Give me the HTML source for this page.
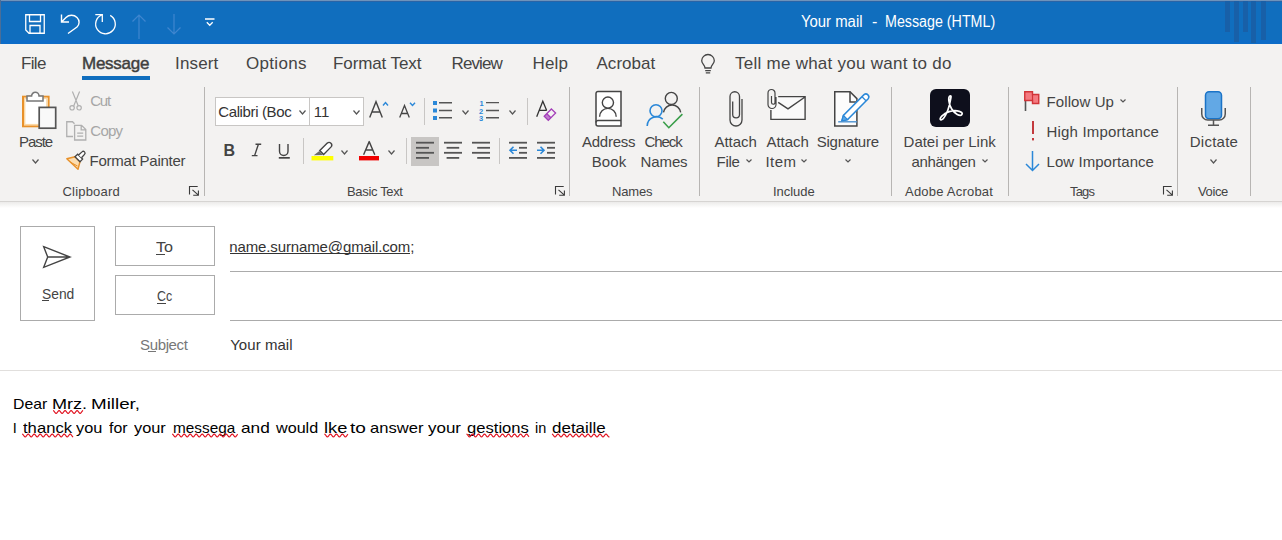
<!DOCTYPE html>
<html><head><meta charset="utf-8"><style>
html,body{margin:0;padding:0;}
body{width:1282px;height:540px;overflow:hidden;position:relative;background:#fff;font-family:"Liberation Sans",sans-serif;}
.a{position:absolute;}
.t{position:absolute;white-space:pre;line-height:1.1171875;font-family:"Liberation Sans",sans-serif;}
svg{overflow:visible}
</style></head><body>
<div class="a" style="left:0px;top:0px;width:1282px;height:44px;background:#106EBE;"></div>
<div class="a" style="left:0px;top:40px;width:1282px;height:4px;background:#0C6CC8;"></div>
<div class="a" style="left:0px;top:0px;width:1282px;height:1px;background:#6F93BB;"></div>
<div class="a" style="left:0px;top:1px;width:1282px;height:1px;background:#2A64A6;"></div>
<div class="a" style="left:0px;top:0px;width:1px;height:44px;background:#4A6E98;"></div>
<div class="a" style="left:1225px;top:1px;width:5px;height:31px;background:#1860A8;"></div>
<div class="a" style="left:1234px;top:1px;width:5px;height:41px;background:#1860A8;"></div>
<div class="a" style="left:1243px;top:1px;width:5px;height:31px;background:#1860A8;"></div>
<div class="a" style="left:1251px;top:1px;width:5px;height:42px;background:#1860A8;"></div>
<div class="a" style="left:1261px;top:1px;width:5px;height:39px;background:#1860A8;"></div>
<div class="t" style="left:801.00px;top:13px;font-size:16px;color:#FFFFFF;transform:scaleX(0.9305);transform-origin:0 0;">Your mail</div>
<div class="t" style="left:872.00px;top:13px;font-size:16px;color:#FFFFFF;">-</div>
<div class="t" style="left:885.11px;top:13px;font-size:16px;color:#FFFFFF;transform:scaleX(0.8916);transform-origin:0 0;">Message (HTML)</div>
<svg class="a" style="left:25px;top:14px" width="20" height="20" viewBox="0 0 20 20"><path d="M0.75 0.75H19.25V19.25H4L0.75 16Z M4.5 0.75V7.5H15.5V0.75 M5 19.25V11.5H15V19.25" fill="none" stroke="#fff" stroke-width="1.3"/></svg>
<svg class="a" style="left:60px;top:13px" width="20" height="21" viewBox="0 0 20 21"><path d="M1.5 1.5V9H9 M1.5 9L6 4.5C9 1.5 14 1.5 17 4.5C20 7.5 19.5 11.5 17 14L8 20.5" fill="none" stroke="#fff" stroke-width="1.4"/></svg>
<svg class="a" style="left:94px;top:13px" width="22" height="22" viewBox="0 0 22 22"><path d="M16.2 2.4A9.8 9.8 0 1 1 7.8 1.9" fill="none" stroke="#fff" stroke-width="1.3"/><path d="M1.3 1.6H8.3V8.9" fill="none" stroke="#fff" stroke-width="1.3"/></svg>
<svg class="a" style="left:132px;top:14px" width="15" height="25" viewBox="0 0 15 25"><path d="M7 1V25 M0.5 7.5L7 1L13.5 7.5" fill="none" stroke="#3F86CF" stroke-width="1.2"/></svg>
<svg class="a" style="left:167px;top:14px" width="15" height="21" viewBox="0 0 15 21"><path d="M7 0V20 M0.5 13.5L7 20L13.5 13.5" fill="none" stroke="#3F86CF" stroke-width="1.2"/></svg>
<svg class="a" style="left:204.5px;top:18px" width="10" height="10" viewBox="0 0 10 10"><path d="M0 1H9.5 M1.8 4.2L4.75 7.2L7.7 4.2" fill="none" stroke="#fff" stroke-width="1.3"/></svg>
<div class="a" style="left:0px;top:44px;width:1282px;height:158px;background:#F3F2F1;"></div>
<div class="t" style="left:21.00px;top:54px;font-size:17px;color:#444444;letter-spacing:-0.646px;">File</div>
<div class="t" style="left:82.00px;top:54px;font-size:17px;color:#3f3f3f;letter-spacing:-0.254px;-webkit-text-stroke:0.45px #3f3f3f;">Message</div>
<div class="a" style="left:82px;top:76px;width:68px;height:4px;background:#106EBE;"></div>
<div class="t" style="left:175.00px;top:54px;font-size:17px;color:#444444;letter-spacing:0.161px;">Insert</div>
<div class="t" style="left:246.00px;top:54px;font-size:17px;color:#444444;letter-spacing:0.319px;">Options</div>
<div class="t" style="left:333.00px;top:54px;font-size:17px;color:#444444;letter-spacing:-0.102px;">Format Text</div>
<div class="t" style="left:451.50px;top:54px;font-size:17px;color:#444444;letter-spacing:-0.893px;">Review</div>
<div class="t" style="left:532.50px;top:54px;font-size:17px;color:#444444;letter-spacing:0.164px;">Help</div>
<div class="t" style="left:596.50px;top:54px;font-size:17px;color:#444444;letter-spacing:0.023px;">Acrobat</div>
<div class="t" style="left:735.00px;top:54px;font-size:17px;color:#444444;letter-spacing:0.257px;">Tell me what you want to do</div>
<svg class="a" style="left:700px;top:53px" width="16" height="22" viewBox="0 0 16 22"><path d="M5 15C5 12 1.7 10.8 1.7 7.8A6.3 6.3 0 0 1 14.3 7.8C14.3 10.8 11 12 11 15Z M5.2 17.6H10.8 M5.8 19.9H10.2" fill="none" stroke="#444" stroke-width="1.3"/></svg>
<div class="a" style="left:0px;top:201px;width:1282px;height:1px;background:#D6D4D2;"></div>
<div class="a" style="left:0px;top:202px;width:1282px;height:6px;background:linear-gradient(#ECEBEA,#FFFFFF);"></div>
<div class="a" style="left:204px;top:87px;width:1px;height:109px;background:#B7B5B3;"></div>
<div class="a" style="left:569px;top:87px;width:1px;height:109px;background:#B7B5B3;"></div>
<div class="a" style="left:699px;top:87px;width:1px;height:109px;background:#B7B5B3;"></div>
<div class="a" style="left:891px;top:87px;width:1px;height:109px;background:#B7B5B3;"></div>
<div class="a" style="left:1008px;top:87px;width:1px;height:109px;background:#B7B5B3;"></div>
<div class="a" style="left:1177px;top:87px;width:1px;height:109px;background:#B7B5B3;"></div>
<div class="a" style="left:1250px;top:87px;width:1px;height:109px;background:#B7B5B3;"></div>
<div class="t" style="left:62.50px;top:185px;font-size:13px;color:#444444;letter-spacing:0.198px;">Clipboard</div>
<div class="t" style="left:347.00px;top:185px;font-size:13px;color:#444444;letter-spacing:-0.337px;">Basic Text</div>
<div class="t" style="left:612.00px;top:185px;font-size:13px;color:#444444;letter-spacing:-0.169px;">Names</div>
<div class="t" style="left:773.00px;top:185px;font-size:13px;color:#444444;letter-spacing:-0.032px;">Include</div>
<div class="t" style="left:905.00px;top:185px;font-size:13px;color:#444444;letter-spacing:0.217px;">Adobe Acrobat</div>
<div class="t" style="left:1070.00px;top:185px;font-size:13px;color:#444444;letter-spacing:-0.820px;">Tags</div>
<div class="t" style="left:1198.00px;top:185px;font-size:13px;color:#444444;letter-spacing:-0.393px;">Voice</div>
<svg class="a" style="left:189px;top:186px" width="11" height="10" viewBox="0 0 11 10"><path d="M0.5 8.6V0.5H8.7" fill="none" stroke="#3a3a3a" stroke-width="1.1"/><path d="M3.5 3.8L9.4 9.2 M9.4 4.4V9.2H4.2" fill="none" stroke="#3a3a3a" stroke-width="1.1"/></svg>
<svg class="a" style="left:555px;top:186px" width="11" height="10" viewBox="0 0 11 10"><path d="M0.5 8.6V0.5H8.7" fill="none" stroke="#3a3a3a" stroke-width="1.1"/><path d="M3.5 3.8L9.4 9.2 M9.4 4.4V9.2H4.2" fill="none" stroke="#3a3a3a" stroke-width="1.1"/></svg>
<svg class="a" style="left:1163px;top:186px" width="11" height="10" viewBox="0 0 11 10"><path d="M0.5 8.6V0.5H8.7" fill="none" stroke="#3a3a3a" stroke-width="1.1"/><path d="M3.5 3.8L9.4 9.2 M9.4 4.4V9.2H4.2" fill="none" stroke="#3a3a3a" stroke-width="1.1"/></svg>
<svg class="a" style="left:22px;top:91px" width="35" height="39" viewBox="0 0 35 39"><rect x="1" y="5.7" width="25.6" height="29.6" fill="#fff" stroke="#E8912A" stroke-width="2"/><rect x="2.7" y="7.4" width="22.2" height="26.2" fill="none" stroke="#FBD9A6" stroke-width="1.4"/><path d="M5 10V5H9.6A3.7 3.7 0 0 1 17 5H21V10Z" fill="#fff" stroke="#777" stroke-width="1.5"/><rect x="17.2" y="16.4" width="16.5" height="20.8" fill="#F9F9F9" stroke="#555" stroke-width="1.7"/></svg>
<div class="t" style="left:19.00px;top:134px;font-size:15px;color:#444444;letter-spacing:-1.054px;">Paste</div>
<svg class="a" style="left:32px;top:158.5px" width="7" height="5" viewBox="0 0 7 5"><path d="M0.5 0.5L3.5 4L6.5 0.5" fill="none" stroke="#555" stroke-width="1.2"/></svg>
<svg class="a" style="left:69px;top:91px" width="14" height="20" viewBox="0 0 14 20"><path d="M3.4 0.6L9.3 15 M10.6 0.6L4.7 15" fill="none" stroke="#B0B0B0" stroke-width="1.2"/><circle cx="3.1" cy="16.8" r="2.2" fill="none" stroke="#B0B0B0" stroke-width="1.2"/><circle cx="10.1" cy="16.8" r="2.2" fill="none" stroke="#B0B0B0" stroke-width="1.2"/></svg>
<div class="t" style="left:90.30px;top:93px;font-size:15px;color:#A6A6A6;letter-spacing:-1.287px;">Cut</div>
<svg class="a" style="left:66px;top:121px" width="21" height="20" viewBox="0 0 21 20"><path d="M7 15.5H0.75V0.75H6.5L8.5 2.8" fill="none" stroke="#B0B0B0" stroke-width="1.3"/><path d="M8.6 4.3H15.6L19.8 8.5V19H8.6Z M15.2 4.3V8.9H19.8 M11.2 12.2H17.2 M11.2 15.2H17.2" fill="none" stroke="#B0B0B0" stroke-width="1.3"/></svg>
<div class="t" style="left:90.30px;top:123px;font-size:15px;color:#A6A6A6;letter-spacing:-0.739px;">Copy</div>
<svg class="a" style="left:66px;top:151px" width="20" height="19" viewBox="0 0 20 19"><path d="M0.8 7.8L9 5.8L14 10.8L12 18.3Z" fill="#FCDDB0" stroke="#E8912A" stroke-width="1.4" stroke-linejoin="round"/><path d="M4 11L11.5 15" stroke="#E8912A" stroke-width="1"/><path d="M9 5.8L11.7 3.2L16.6 8.1L14 10.8Z" fill="#fff" stroke="#444" stroke-width="1.3"/><path d="M12.6 4L16 0.9A1.7 1.7 0 0 1 18.5 3.4L15.5 6.8" fill="#fff" stroke="#444" stroke-width="1.3"/></svg>
<div class="t" style="left:89.60px;top:153px;font-size:15px;color:#444444;letter-spacing:-0.246px;">Format Painter</div>
<div class="a" style="left:215px;top:97px;width:95px;height:29px;background:#fff;box-sizing:border-box;border:1px solid #C8C6C4;"></div>
<div class="a" style="left:309px;top:97px;width:55px;height:29px;background:#fff;box-sizing:border-box;border:1px solid #C8C6C4;"></div>
<div class="t" style="left:218.20px;top:104px;font-size:15px;color:#333;letter-spacing:-0.365px;">Calibri (Boc</div>
<svg class="a" style="left:299px;top:110.3px" width="7" height="5" viewBox="0 0 7 5"><path d="M0.5 0.5L3.5 4L6.5 0.5" fill="none" stroke="#555" stroke-width="1.2"/></svg>
<div class="t" style="left:313.70px;top:104px;font-size:15px;color:#333;">11</div>
<svg class="a" style="left:353px;top:110.3px" width="7" height="5" viewBox="0 0 7 5"><path d="M0.5 0.5L3.5 4L6.5 0.5" fill="none" stroke="#555" stroke-width="1.2"/></svg>
<svg class="a" style="left:369px;top:101px" width="20" height="17" viewBox="0 0 20 17"><path d="M0.7 16.5L7 0.7L13.3 16.5 M3 11H11" fill="none" stroke="#444" stroke-width="1.4"/><path d="M14 4.5L16.5 1.5L19 4.5" fill="none" stroke="#2B88D8" stroke-width="1.4"/></svg>
<svg class="a" style="left:399px;top:102px" width="18" height="16" viewBox="0 0 18 16"><path d="M0.7 15.5L5.5 3.5L10.3 15.5 M2.5 11.5H8.5" fill="none" stroke="#444" stroke-width="1.3"/><path d="M11 0.7L13.5 3.5L16 0.7" fill="none" stroke="#2B88D8" stroke-width="1.4"/></svg>
<div class="a" style="left:424px;top:98px;width:1px;height:27px;background:#C8C6C4;"></div>
<svg class="a" style="left:432px;top:100px" width="20" height="20" viewBox="0 0 20 20"><rect x="1" y="1" width="4" height="4" fill="#2B88D8"/><rect x="1" y="8.5" width="4" height="4" fill="#2B88D8"/><rect x="1" y="16" width="4" height="4" fill="#2B88D8"/><path d="M7 2.7H20 M7 10.5H20 M7 17.8H20" stroke="#555" stroke-width="1.4"/></svg>
<svg class="a" style="left:462px;top:109.5px" width="7" height="5" viewBox="0 0 7 5"><path d="M0.5 0.5L3.5 4L6.5 0.5" fill="none" stroke="#555" stroke-width="1.2"/></svg>
<svg class="a" style="left:479px;top:99px" width="20" height="22" viewBox="0 0 20 22"><text x="0.5" y="7" font-size="7.5" font-weight="bold" fill="#2B88D8" font-family="Liberation Sans">1</text><text x="0" y="15" font-size="7.5" font-weight="bold" fill="#2B88D8" font-family="Liberation Sans">2</text><text x="0" y="22" font-size="7.5" font-weight="bold" fill="#2B88D8" font-family="Liberation Sans">3</text><path d="M7 3.6H20 M7 11.5H20 M7 18.8H20" stroke="#555" stroke-width="1.4"/></svg>
<svg class="a" style="left:509px;top:109.5px" width="7" height="5" viewBox="0 0 7 5"><path d="M0.5 0.5L3.5 4L6.5 0.5" fill="none" stroke="#555" stroke-width="1.2"/></svg>
<div class="a" style="left:527px;top:98px;width:1px;height:27px;background:#C8C6C4;"></div>
<svg class="a" style="left:536px;top:101px" width="21" height="21" viewBox="0 0 21 21"><path d="M0.7 15.8L6.8 0.3L10.7 9.4 M2.9 9.4H10.7" fill="none" stroke="#333" stroke-width="1.3"/><path d="M8.2 15.3L10.8 12.6L14.9 16.7L12.3 19.4Z" fill="#C27BD0"/><path d="M15.4 8L19.6 12L12.3 19.4L8.2 15.3Z M10.8 12.6L14.9 16.7" fill="none" stroke="#A33EB8" stroke-width="1.3"/></svg>
<div class="t" style="left:223.40px;top:142px;font-size:16px;color:#444;font-weight:bold;">B</div>
<svg class="a" style="left:250px;top:143px" width="13" height="14" viewBox="0 0 13 14"><path d="M5.5 1.3H11.2 M1.8 12.6H7.5 M8.4 1.3L4.6 12.6" fill="none" stroke="#444" stroke-width="1.4"/></svg>
<svg class="a" style="left:278px;top:143px" width="13" height="17" viewBox="0 0 13 17"><path d="M1.5 1V8.2A4 4 0 0 0 10 8.2V1" fill="none" stroke="#444" stroke-width="1.4"/><rect x="0.8" y="14" width="11" height="1.7" fill="#444"/></svg>
<div class="a" style="left:303px;top:138px;width:1px;height:26px;background:#C8C6C4;"></div>
<svg class="a" style="left:311px;top:140px" width="22" height="21" viewBox="0 0 22 21"><path d="M8.8 10.6L16.3 3.1A2.7 2.7 0 0 1 20.1 6.9L12.6 14.4Z" fill="#fff" stroke="#444" stroke-width="1.4"/><path d="M2.8 15.2L8.3 11L12.2 14.9Z" fill="#6A6A6A"/><rect x="0.5" y="16" width="21.8" height="4.4" fill="#FFFF00"/></svg>
<svg class="a" style="left:341px;top:149.7px" width="7" height="5" viewBox="0 0 7 5"><path d="M0.5 0.5L3.5 4L6.5 0.5" fill="none" stroke="#555" stroke-width="1.2"/></svg>
<svg class="a" style="left:359px;top:140px" width="20" height="21" viewBox="0 0 20 21"><path d="M4.6 14.7L10.2 1.6L15.8 14.7 M6.6 10H13.8" fill="none" stroke="#444" stroke-width="1.4" stroke-linejoin="round"/><rect x="0" y="16" width="20" height="4.4" fill="#F00000"/></svg>
<svg class="a" style="left:388px;top:149.7px" width="7" height="5" viewBox="0 0 7 5"><path d="M0.5 0.5L3.5 4L6.5 0.5" fill="none" stroke="#555" stroke-width="1.2"/></svg>
<div class="a" style="left:406px;top:138px;width:1px;height:26px;background:#C8C6C4;"></div>
<div class="a" style="left:411px;top:137px;width:28px;height:29px;background:#C8C6C4;"></div>
<svg class="a" style="left:416px;top:141px" width="18" height="18" viewBox="0 0 18 18"><path d="M0 1.7H18" stroke="#555" stroke-width="1.8"/><path d="M0 6.8H13" stroke="#555" stroke-width="1.8"/><path d="M0 11.8H18" stroke="#555" stroke-width="1.8"/><path d="M0 16.9H13" stroke="#555" stroke-width="1.8"/></svg>
<svg class="a" style="left:444px;top:141px" width="18" height="18" viewBox="0 0 18 18"><path d="M0 1.7H18" stroke="#555" stroke-width="1.8"/><path d="M2.6 6.8H15.2" stroke="#555" stroke-width="1.8"/><path d="M0 11.8H18" stroke="#555" stroke-width="1.8"/><path d="M2.6 16.9H15.2" stroke="#555" stroke-width="1.8"/></svg>
<svg class="a" style="left:472px;top:141px" width="18" height="18" viewBox="0 0 18 18"><path d="M0 1.7H18" stroke="#555" stroke-width="1.8"/><path d="M5.2 6.8H18" stroke="#555" stroke-width="1.8"/><path d="M0 11.8H18" stroke="#555" stroke-width="1.8"/><path d="M5.2 16.9H18" stroke="#555" stroke-width="1.8"/></svg>
<div class="a" style="left:499px;top:138px;width:1px;height:26px;background:#C8C6C4;"></div>
<svg class="a" style="left:509px;top:141px" width="18" height="18" viewBox="0 0 18 18"><path d="M0 1.7H18" stroke="#555" stroke-width="1.8"/><path d="M10 6.8H18" stroke="#555" stroke-width="1.8"/><path d="M10 11.8H18" stroke="#555" stroke-width="1.8"/><path d="M0 16.9H18" stroke="#555" stroke-width="1.8"/><path d="M1 9.3H8 M4.5 5.8L1 9.3L4.5 12.8" fill="none" stroke="#2B88D8" stroke-width="1.6"/></svg>
<svg class="a" style="left:537px;top:141px" width="18" height="18" viewBox="0 0 18 18"><path d="M0 1.7H18" stroke="#555" stroke-width="1.8"/><path d="M10 6.8H18" stroke="#555" stroke-width="1.8"/><path d="M10 11.8H18" stroke="#555" stroke-width="1.8"/><path d="M0 16.9H18" stroke="#555" stroke-width="1.8"/><path d="M0 9.3H7 M3.5 5.8L7 9.3L3.5 12.8" fill="none" stroke="#2B88D8" stroke-width="1.6"/></svg>
<svg class="a" style="left:595px;top:90px" width="28" height="38" viewBox="0 0 28 38"><path d="M1 3.5A2 2 0 0 1 3 1.5H26V36H3A2 2 0 0 1 1 34Z" fill="#fff" stroke="#444" stroke-width="1.5"/><path d="M1 32.5A2 2 0 0 1 3 30.5H26" fill="none" stroke="#444" stroke-width="1.5"/><circle cx="12.9" cy="12.6" r="5.6" fill="none" stroke="#444" stroke-width="1.4"/><path d="M4.6 26.7A8.3 8.3 0 0 1 21.2 26.7" fill="none" stroke="#444" stroke-width="1.4"/></svg>
<div class="t" style="left:582.00px;top:134px;font-size:15px;color:#444444;letter-spacing:-0.254px;">Address</div>
<div class="t" style="left:591.70px;top:154px;font-size:15px;color:#444444;letter-spacing:0.104px;">Book</div>
<svg class="a" style="left:644px;top:89px" width="42" height="42" viewBox="0 0 42 42"><circle cx="27.3" cy="9.4" r="6" fill="#F3F2F1" stroke="#444" stroke-width="1.4"/><path d="M19.5 23.4A8.7 8.7 0 0 1 36.7 23.4" fill="none" stroke="#444" stroke-width="1.4"/><circle cx="12" cy="21.7" r="6" fill="#F3F2F1" stroke="#2B88D8" stroke-width="1.6"/><path d="M3.2 37A9.3 9.3 0 0 1 18.8 30.2" fill="none" stroke="#2B88D8" stroke-width="1.6"/><path d="M19.3 32.8L24.8 38.7L38.4 25.1" fill="none" stroke="#3A9E4A" stroke-width="1.6"/></svg>
<div class="t" style="left:644.60px;top:134px;font-size:15px;color:#444444;letter-spacing:-1.104px;">Check</div>
<div class="t" style="left:640.60px;top:154px;font-size:15px;color:#444444;letter-spacing:-0.128px;">Names</div>
<svg class="a" style="left:729px;top:90px" width="15" height="38" viewBox="0 0 15 38"><path d="M13 9V30A6 6 0 0 1 1 30V6.5A4.75 4.75 0 0 1 10.5 6.5V24.5A3.4 3.4 0 0 1 3.7 24.5V11.5" fill="none" stroke="#444" stroke-width="1.3"/></svg>
<div class="t" style="left:714.50px;top:134px;font-size:15px;color:#444444;letter-spacing:-0.036px;">Attach</div>
<div class="t" style="left:716.50px;top:154px;font-size:15px;color:#444444;letter-spacing:-0.276px;">File</div>
<svg class="a" style="left:746px;top:158.5px" width="6" height="4" viewBox="0 0 6 4"><path d="M0.5 0.5L3.0 3L5.5 0.5" fill="none" stroke="#555" stroke-width="1.2"/></svg>
<svg class="a" style="left:766px;top:88px" width="42" height="34" viewBox="0 0 42 34"><path d="M4.9 8.6H39.1V31.4H4.9Z" fill="#FAFAFA" stroke="none"/><path d="M12.2 8.6H39.1V31.4H4.9V22 M12.2 14.3L22 20.8L39 9" fill="none" stroke="#444" stroke-width="1.4"/><path d="M10 9V16.5A4 4 0 0 1 2 16.5V5A3.5 3.5 0 0 1 9 5V14.5A1.75 1.75 0 0 1 5.5 14.5V8" fill="none" stroke="#444" stroke-width="1.2"/></svg>
<div class="t" style="left:766.50px;top:134px;font-size:15px;color:#444444;letter-spacing:-0.036px;">Attach</div>
<div class="t" style="left:765.50px;top:154px;font-size:15px;color:#444444;letter-spacing:0.441px;">Item</div>
<svg class="a" style="left:801px;top:158.5px" width="6" height="4" viewBox="0 0 6 4"><path d="M0.5 0.5L3.0 3L5.5 0.5" fill="none" stroke="#555" stroke-width="1.2"/></svg>
<svg class="a" style="left:834px;top:91px" width="36" height="36" viewBox="0 0 36 36"><path d="M0.75 0.75H16L22.9 7.6V34.9H0.75Z" fill="#FCFCFC" stroke="#444" stroke-width="1.5"/><path d="M16 0.75V10.9H22" fill="none" stroke="#444" stroke-width="1.5"/><path d="M7.8 30L9.4 24.4L30 3.6A3 3 0 0 1 34.2 7.8L13.6 28.6Z" fill="#fff" stroke="#2B88D8" stroke-width="1.5"/><path d="M7.8 30L9.4 24.4L13.6 28.6Z" fill="#5AA7E8" stroke="#2B88D8" stroke-width="1.2"/><path d="M28 5.8L32 9.8" stroke="#2B88D8" stroke-width="1.3"/><path d="M4.2 30.8H22.9" stroke="#4A90D0" stroke-width="1.4"/></svg>
<div class="t" style="left:816.70px;top:134px;font-size:15px;color:#444444;letter-spacing:-0.234px;">Signature</div>
<svg class="a" style="left:845px;top:158.5px" width="6" height="4" viewBox="0 0 6 4"><path d="M0.5 0.5L3.0 3L5.5 0.5" fill="none" stroke="#555" stroke-width="1.2"/></svg>
<svg class="a" style="left:930px;top:89px" width="40" height="38" viewBox="0 0 40 38"><rect x="0" y="0" width="40" height="38" rx="6" fill="#0E0F1C"/><path transform="translate(20.5 20) scale(1.2) translate(-20.5 -20)" d="M20.5 9C18 9 19 16 21.5 20C24 24 28.5 26.5 30 24.5C31.5 22.5 26 20.5 20 22C14 23.5 10.5 28.5 12.5 29C14.5 29.5 18.5 22 19.5 17C20.5 12 21.5 9 20.5 9Z" fill="none" stroke="#fff" stroke-width="1.45"/></svg>
<div class="t" style="left:903.60px;top:134px;font-size:15px;color:#444444;letter-spacing:-0.035px;">Datei per Link</div>
<div class="t" style="left:911.60px;top:154px;font-size:15px;color:#444444;letter-spacing:-0.342px;">anhängen</div>
<svg class="a" style="left:982px;top:158.5px" width="6" height="4" viewBox="0 0 6 4"><path d="M0.5 0.5L3.0 3L5.5 0.5" fill="none" stroke="#555" stroke-width="1.2"/></svg>
<svg class="a" style="left:1024px;top:91px" width="16" height="20" viewBox="0 0 16 20"><path d="M1.5 8V20" stroke="#555" stroke-width="1.6"/><path d="M0.75 0.75H8.5V3.5H14.75V12.5H8.5V9.5H0.75Z" fill="#F47A80" stroke="#D13438" stroke-width="1.4"/><path d="M8.5 3.5V9.5" stroke="#D13438" stroke-width="1.2"/></svg>
<div class="t" style="left:1046.60px;top:94px;font-size:15px;color:#444444;letter-spacing:0.082px;">Follow Up</div>
<svg class="a" style="left:1120px;top:98.5px" width="6" height="4" viewBox="0 0 6 4"><path d="M0.5 0.5L3.0 3L5.5 0.5" fill="none" stroke="#555" stroke-width="1.2"/></svg>
<svg class="a" style="left:1031px;top:121px" width="4" height="20" viewBox="0 0 4 20"><path d="M2 0V13" stroke="#C33A3E" stroke-width="2"/><rect x="1" y="17" width="2" height="2.4" fill="#C33A3E"/></svg>
<div class="t" style="left:1046.60px;top:124px;font-size:15px;color:#444444;letter-spacing:0.163px;">High Importance</div>
<svg class="a" style="left:1025px;top:151px" width="15" height="20" viewBox="0 0 15 20"><path d="M7.5 0V19.5 M1 13L7.5 19.5L14 13" fill="none" stroke="#2B88D8" stroke-width="1.5"/></svg>
<div class="t" style="left:1046.60px;top:154px;font-size:15px;color:#444444;letter-spacing:0.048px;">Low Importance</div>
<svg class="a" style="left:1201px;top:91px" width="25" height="35" viewBox="0 0 25 35"><rect x="4.5" y="0.75" width="16" height="27" rx="3.5" fill="#62A8E5" stroke="#1A73C7" stroke-width="1.5"/><path d="M0.75 17V23A6 6 0 0 0 6.75 29H18.25A6 6 0 0 0 24.25 23V17 M12.5 29V34 M7 34.25H18" fill="none" stroke="#555" stroke-width="1.5"/></svg>
<div class="t" style="left:1189.80px;top:134px;font-size:15px;color:#444444;letter-spacing:0.243px;">Dictate</div>
<svg class="a" style="left:1210px;top:158.5px" width="7" height="5" viewBox="0 0 7 5"><path d="M0.5 0.5L3.5 4L6.5 0.5" fill="none" stroke="#555" stroke-width="1.2"/></svg>
<div class="a" style="left:20px;top:226px;width:75px;height:95px;box-sizing:border-box;border:1px solid #ABABAB;background:#fff;"></div>
<svg class="a" style="left:43px;top:246px" width="28" height="22" viewBox="0 0 28 22"><path d="M0.7 0.7L27 11L0.7 21.3L4.7 11Z M4.7 11H27" fill="none" stroke="#444" stroke-width="1.4" stroke-linejoin="miter"/></svg>
<div class="t" style="left:41.50px;top:286px;font-size:15px;color:#444444;transform:scaleX(0.9225);transform-origin:0 0;">Send</div>
<div class="a" style="left:42px;top:300px;width:7px;height:1px;background:#444;"></div>
<div class="a" style="left:115px;top:226px;width:100px;height:40px;box-sizing:border-box;border:1px solid #ABABAB;background:#fff;"></div>
<div class="a" style="left:115px;top:275px;width:100px;height:40px;box-sizing:border-box;border:1px solid #ABABAB;background:#fff;"></div>
<div class="t" style="left:156.10px;top:239px;font-size:15px;color:#444444;transform:scaleX(1.0774);transform-origin:0 0;">To</div>
<div class="a" style="left:156px;top:254px;width:9px;height:1px;background:#444;"></div>
<div class="t" style="left:157.20px;top:288px;font-size:15px;color:#444444;transform:scaleX(0.8284);transform-origin:0 0;">Cc</div>
<div class="a" style="left:157px;top:303px;width:9px;height:1px;background:#444;"></div>
<div class="a" style="left:230px;top:271px;width:1052px;height:1px;background:#ABABAB;"></div>
<div class="a" style="left:230px;top:320px;width:1052px;height:1px;background:#ABABAB;"></div>
<div class="t" style="left:229.20px;top:239px;font-size:15px;color:#333;letter-spacing:-0.119px;">name.surname@gmail.com;</div>
<div class="a" style="left:230px;top:253px;width:180px;height:1px;background:#333;"></div>
<div class="t" style="left:140.10px;top:337px;font-size:15px;color:#777;letter-spacing:-0.377px;">Subject</div>
<div class="a" style="left:148px;top:351px;width:8px;height:1px;background:#777;"></div>
<div class="t" style="left:230.20px;top:337px;font-size:15px;color:#333;letter-spacing:0.044px;">Your mail</div>
<div class="a" style="left:0px;top:370px;width:1282px;height:1px;background:#E1DFDD;"></div>
<div class="t" style="left:12.91px;top:396px;font-size:14.5px;color:#000;transform:scaleX(1.0882);transform-origin:0 0;">Dear</div>
<div class="t" style="left:52.25px;top:396px;font-size:14.5px;color:#000;transform:scaleX(1.2463);transform-origin:0 0;">Mrz.</div>
<div class="t" style="left:90.81px;top:396px;font-size:14.5px;color:#000;transform:scaleX(1.2948);transform-origin:0 0;">Miller,</div>
<div class="t" style="left:12.70px;top:420px;font-size:14.5px;color:#000;">I</div>
<div class="t" style="left:22.50px;top:420px;font-size:14.5px;color:#000;transform:scaleX(1.1479);transform-origin:0 0;">thanck</div>
<div class="t" style="left:76.10px;top:420px;font-size:14.5px;color:#000;transform:scaleX(1.1238);transform-origin:0 0;">you</div>
<div class="t" style="left:108.60px;top:420px;font-size:14.5px;color:#000;transform:scaleX(1.0940);transform-origin:0 0;">for</div>
<div class="t" style="left:134.00px;top:420px;font-size:14.5px;color:#000;transform:scaleX(1.1276);transform-origin:0 0;">your</div>
<div class="t" style="left:172.70px;top:420px;font-size:14.5px;color:#000;transform:scaleX(1.0574);transform-origin:0 0;">messega</div>
<div class="t" style="left:240.90px;top:420px;font-size:14.5px;color:#000;transform:scaleX(1.1895);transform-origin:0 0;">and</div>
<div class="t" style="left:275.71px;top:420px;font-size:14.5px;color:#000;transform:scaleX(1.1128);transform-origin:0 0;">would</div>
<div class="t" style="left:323.70px;top:420px;font-size:14.5px;color:#000;transform:scaleX(1.2614);transform-origin:0 0;">lke</div>
<div class="t" style="left:350.40px;top:420px;font-size:14.5px;color:#000;transform:scaleX(1.3135);transform-origin:0 0;">to</div>
<div class="t" style="left:370.00px;top:420px;font-size:14.5px;color:#000;transform:scaleX(1.1425);transform-origin:0 0;">answer</div>
<div class="t" style="left:427.80px;top:420px;font-size:14.5px;color:#000;transform:scaleX(1.1699);transform-origin:0 0;">your</div>
<div class="t" style="left:466.80px;top:420px;font-size:14.5px;color:#000;transform:scaleX(1.1459);transform-origin:0 0;">gestions</div>
<div class="t" style="left:534.70px;top:420px;font-size:14.5px;color:#000;transform:scaleX(0.9981);transform-origin:0 0;">in</div>
<div class="t" style="left:552.10px;top:420px;font-size:14.5px;color:#000;transform:scaleX(1.1703);transform-origin:0 0;">detaille</div>
<svg class="a" style="left:0;top:0" width="1282" height="540"><path d="M53.10 410.55 L53.60 410.74 L54.10 411.27 L54.60 412.00 L55.10 412.73 L55.60 413.26 L56.10 413.45 L56.60 413.26 L57.10 412.73 L57.60 412.00 L58.10 411.27 L58.60 410.74 L59.10 410.55 L59.60 410.74 L60.10 411.27 L60.60 412.00 L61.10 412.73 L61.60 413.26 L62.10 413.45 L62.60 413.26 L63.10 412.73 L63.60 412.00 L64.10 411.28 L64.60 410.74 L65.10 410.55 L65.60 410.74 L66.10 411.27 L66.60 412.00 L67.10 412.72 L67.60 413.26 L68.10 413.45 L68.60 413.26 L69.10 412.73 L69.60 412.00 L70.10 411.28 L70.60 410.74 L71.10 410.55 L71.60 410.74 L72.10 411.27 L72.60 412.00 L73.10 412.72 L73.60 413.26 L74.10 413.45 L74.60 413.26 L75.10 412.73 L75.60 412.00 L76.10 411.28 L76.60 410.74 L77.10 410.55 L77.60 410.74 L78.10 411.27 L78.60 412.00 L79.10 412.72 L79.60 413.26 L80.10 413.45 L80.60 413.26 L81.10 412.73 L81.60 412.00 L82.10 411.28 L82.60 410.74 L83.10 410.55" fill="none" stroke="#E0101E" stroke-width="1.2"/></svg>
<svg class="a" style="left:0;top:0" width="1282" height="540"><path d="M22.20 434.05 L22.70 434.24 L23.20 434.77 L23.70 435.50 L24.20 436.23 L24.70 436.76 L25.20 436.95 L25.70 436.76 L26.20 436.23 L26.70 435.50 L27.20 434.77 L27.70 434.24 L28.20 434.05 L28.70 434.24 L29.20 434.77 L29.70 435.50 L30.20 436.23 L30.70 436.76 L31.20 436.95 L31.70 436.76 L32.20 436.23 L32.70 435.50 L33.20 434.77 L33.70 434.24 L34.20 434.05 L34.70 434.24 L35.20 434.77 L35.70 435.50 L36.20 436.23 L36.70 436.76 L37.20 436.95 L37.70 436.76 L38.20 436.22 L38.70 435.50 L39.20 434.77 L39.70 434.24 L40.20 434.05 L40.70 434.24 L41.20 434.78 L41.70 435.50 L42.20 436.23 L42.70 436.76 L43.20 436.95 L43.70 436.76 L44.20 436.22 L44.70 435.50 L45.20 434.77 L45.70 434.24 L46.20 434.05 L46.70 434.24 L47.20 434.77 L47.70 435.50 L48.20 436.23 L48.70 436.76 L49.20 436.95 L49.70 436.76 L50.20 436.23 L50.70 435.50 L51.20 434.77 L51.70 434.24 L52.20 434.05 L52.70 434.24 L53.20 434.77 L53.70 435.50 L54.20 436.23 L54.70 436.76 L55.20 436.95 L55.70 436.76 L56.20 436.23 L56.70 435.50 L57.20 434.77 L57.70 434.24 L58.20 434.05 L58.70 434.24 L59.20 434.77 L59.70 435.50 L60.20 436.23 L60.70 436.76 L61.20 436.95 L61.70 436.76 L62.20 436.23 L62.70 435.50 L63.20 434.77 L63.70 434.24 L64.20 434.05 L64.70 434.24 L65.20 434.77 L65.70 435.50 L66.20 436.23 L66.70 436.76 L67.20 436.95 L67.70 436.76 L68.20 436.23 L68.70 435.50 L69.20 434.77 L69.70 434.24 L70.20 434.05 L70.70 434.24 L71.20 434.77 L71.70 435.50 L72.20 436.23 L72.70 436.76 L73.20 436.95" fill="none" stroke="#E0101E" stroke-width="1.2"/></svg>
<svg class="a" style="left:0;top:0" width="1282" height="540"><path d="M172.20 434.05 L172.70 434.24 L173.20 434.77 L173.70 435.50 L174.20 436.23 L174.70 436.76 L175.20 436.95 L175.70 436.76 L176.20 436.23 L176.70 435.50 L177.20 434.77 L177.70 434.24 L178.20 434.05 L178.70 434.24 L179.20 434.77 L179.70 435.50 L180.20 436.23 L180.70 436.76 L181.20 436.95 L181.70 436.76 L182.20 436.23 L182.70 435.50 L183.20 434.77 L183.70 434.24 L184.20 434.05 L184.70 434.24 L185.20 434.77 L185.70 435.50 L186.20 436.23 L186.70 436.76 L187.20 436.95 L187.70 436.76 L188.20 436.23 L188.70 435.50 L189.20 434.77 L189.70 434.24 L190.20 434.05 L190.70 434.24 L191.20 434.77 L191.70 435.50 L192.20 436.23 L192.70 436.76 L193.20 436.95 L193.70 436.76 L194.20 436.23 L194.70 435.50 L195.20 434.77 L195.70 434.24 L196.20 434.05 L196.70 434.24 L197.20 434.77 L197.70 435.50 L198.20 436.23 L198.70 436.76 L199.20 436.95 L199.70 436.76 L200.20 436.23 L200.70 435.50 L201.20 434.77 L201.70 434.24 L202.20 434.05 L202.70 434.24 L203.20 434.77 L203.70 435.50 L204.20 436.23 L204.70 436.76 L205.20 436.95 L205.70 436.76 L206.20 436.23 L206.70 435.50 L207.20 434.77 L207.70 434.24 L208.20 434.05 L208.70 434.24 L209.20 434.77 L209.70 435.50 L210.20 436.23 L210.70 436.76 L211.20 436.95 L211.70 436.76 L212.20 436.23 L212.70 435.50 L213.20 434.77 L213.70 434.24 L214.20 434.05 L214.70 434.24 L215.20 434.77 L215.70 435.50 L216.20 436.23 L216.70 436.76 L217.20 436.95 L217.70 436.76 L218.20 436.23 L218.70 435.50 L219.20 434.77 L219.70 434.24 L220.20 434.05 L220.70 434.24 L221.20 434.77 L221.70 435.50 L222.20 436.23 L222.70 436.76 L223.20 436.95 L223.70 436.76 L224.20 436.23 L224.70 435.50 L225.20 434.77 L225.70 434.24 L226.20 434.05 L226.70 434.24 L227.20 434.77 L227.70 435.50 L228.20 436.23 L228.70 436.76 L229.20 436.95 L229.70 436.76 L230.20 436.23 L230.70 435.50 L231.20 434.77 L231.70 434.24 L232.20 434.05 L232.70 434.24 L233.20 434.77 L233.70 435.50 L234.20 436.22 L234.70 436.76 L235.20 436.95 L235.70 436.76 L236.20 436.23 L236.70 435.50 L237.20 434.77 L237.70 434.24" fill="none" stroke="#E0101E" stroke-width="1.2"/></svg>
<svg class="a" style="left:0;top:0" width="1282" height="540"><path d="M324.40 434.05 L324.90 434.24 L325.40 434.77 L325.90 435.50 L326.40 436.23 L326.90 436.76 L327.40 436.95 L327.90 436.76 L328.40 436.23 L328.90 435.50 L329.40 434.77 L329.90 434.24 L330.40 434.05 L330.90 434.24 L331.40 434.77 L331.90 435.50 L332.40 436.23 L332.90 436.76 L333.40 436.95 L333.90 436.76 L334.40 436.23 L334.90 435.50 L335.40 434.77 L335.90 434.24 L336.40 434.05 L336.90 434.24 L337.40 434.77 L337.90 435.50 L338.40 436.23 L338.90 436.76 L339.40 436.95 L339.90 436.76 L340.40 436.23 L340.90 435.50 L341.40 434.77 L341.90 434.24 L342.40 434.05 L342.90 434.24 L343.40 434.77 L343.90 435.50 L344.40 436.23 L344.90 436.76 L345.40 436.95 L345.90 436.76 L346.40 436.23 L346.90 435.50 L347.40 434.77 L347.90 434.24" fill="none" stroke="#E0101E" stroke-width="1.2"/></svg>
<svg class="a" style="left:0;top:0" width="1282" height="540"><path d="M466.50 434.05 L467.00 434.24 L467.50 434.77 L468.00 435.50 L468.50 436.23 L469.00 436.76 L469.50 436.95 L470.00 436.76 L470.50 436.23 L471.00 435.50 L471.50 434.77 L472.00 434.24 L472.50 434.05 L473.00 434.24 L473.50 434.77 L474.00 435.50 L474.50 436.23 L475.00 436.76 L475.50 436.95 L476.00 436.76 L476.50 436.23 L477.00 435.50 L477.50 434.77 L478.00 434.24 L478.50 434.05 L479.00 434.24 L479.50 434.77 L480.00 435.50 L480.50 436.23 L481.00 436.76 L481.50 436.95 L482.00 436.76 L482.50 436.23 L483.00 435.50 L483.50 434.77 L484.00 434.24 L484.50 434.05 L485.00 434.24 L485.50 434.77 L486.00 435.50 L486.50 436.23 L487.00 436.76 L487.50 436.95 L488.00 436.76 L488.50 436.23 L489.00 435.50 L489.50 434.77 L490.00 434.24 L490.50 434.05 L491.00 434.24 L491.50 434.77 L492.00 435.50 L492.50 436.23 L493.00 436.76 L493.50 436.95 L494.00 436.76 L494.50 436.23 L495.00 435.50 L495.50 434.77 L496.00 434.24 L496.50 434.05 L497.00 434.24 L497.50 434.77 L498.00 435.50 L498.50 436.23 L499.00 436.76 L499.50 436.95 L500.00 436.76 L500.50 436.23 L501.00 435.50 L501.50 434.77 L502.00 434.24 L502.50 434.05 L503.00 434.24 L503.50 434.77 L504.00 435.50 L504.50 436.23 L505.00 436.76 L505.50 436.95 L506.00 436.76 L506.50 436.23 L507.00 435.50 L507.50 434.77 L508.00 434.24 L508.50 434.05 L509.00 434.24 L509.50 434.77 L510.00 435.50 L510.50 436.23 L511.00 436.76 L511.50 436.95 L512.00 436.76 L512.50 436.23 L513.00 435.50 L513.50 434.77 L514.00 434.24 L514.50 434.05 L515.00 434.24 L515.50 434.77 L516.00 435.50 L516.50 436.23 L517.00 436.76 L517.50 436.95 L518.00 436.76 L518.50 436.23 L519.00 435.50 L519.50 434.77 L520.00 434.24 L520.50 434.05 L521.00 434.24 L521.50 434.77 L522.00 435.50 L522.50 436.23 L523.00 436.76 L523.50 436.95 L524.00 436.76 L524.50 436.23 L525.00 435.50 L525.50 434.77 L526.00 434.24 L526.50 434.05 L527.00 434.24 L527.50 434.77 L528.00 435.50 L528.50 436.22 L529.00 436.76" fill="none" stroke="#E0101E" stroke-width="1.2"/></svg>
<svg class="a" style="left:0;top:0" width="1282" height="540"><path d="M552.00 434.05 L552.50 434.24 L553.00 434.77 L553.50 435.50 L554.00 436.23 L554.50 436.76 L555.00 436.95 L555.50 436.76 L556.00 436.23 L556.50 435.50 L557.00 434.77 L557.50 434.24 L558.00 434.05 L558.50 434.24 L559.00 434.77 L559.50 435.50 L560.00 436.23 L560.50 436.76 L561.00 436.95 L561.50 436.76 L562.00 436.23 L562.50 435.50 L563.00 434.77 L563.50 434.24 L564.00 434.05 L564.50 434.24 L565.00 434.77 L565.50 435.50 L566.00 436.23 L566.50 436.76 L567.00 436.95 L567.50 436.76 L568.00 436.23 L568.50 435.50 L569.00 434.77 L569.50 434.24 L570.00 434.05 L570.50 434.24 L571.00 434.77 L571.50 435.50 L572.00 436.23 L572.50 436.76 L573.00 436.95 L573.50 436.76 L574.00 436.23 L574.50 435.50 L575.00 434.77 L575.50 434.24 L576.00 434.05 L576.50 434.24 L577.00 434.77 L577.50 435.50 L578.00 436.23 L578.50 436.76 L579.00 436.95 L579.50 436.76 L580.00 436.23 L580.50 435.50 L581.00 434.77 L581.50 434.24 L582.00 434.05 L582.50 434.24 L583.00 434.77 L583.50 435.50 L584.00 436.23 L584.50 436.76 L585.00 436.95 L585.50 436.76 L586.00 436.23 L586.50 435.50 L587.00 434.77 L587.50 434.24 L588.00 434.05 L588.50 434.24 L589.00 434.77 L589.50 435.50 L590.00 436.23 L590.50 436.76 L591.00 436.95 L591.50 436.76 L592.00 436.23 L592.50 435.50 L593.00 434.77 L593.50 434.24 L594.00 434.05 L594.50 434.24 L595.00 434.77 L595.50 435.50 L596.00 436.23 L596.50 436.76 L597.00 436.95 L597.50 436.76 L598.00 436.23 L598.50 435.50 L599.00 434.77 L599.50 434.24 L600.00 434.05 L600.50 434.24 L601.00 434.77 L601.50 435.50 L602.00 436.23 L602.50 436.76 L603.00 436.95 L603.50 436.76 L604.00 436.23 L604.50 435.50 L605.00 434.77 L605.50 434.24 L606.00 434.05 L606.50 434.24 L607.00 434.77 L607.50 435.50 L608.00 436.23 L608.50 436.76 L609.00 436.95 L609.50 436.76" fill="none" stroke="#E0101E" stroke-width="1.2"/></svg>
</body></html>
